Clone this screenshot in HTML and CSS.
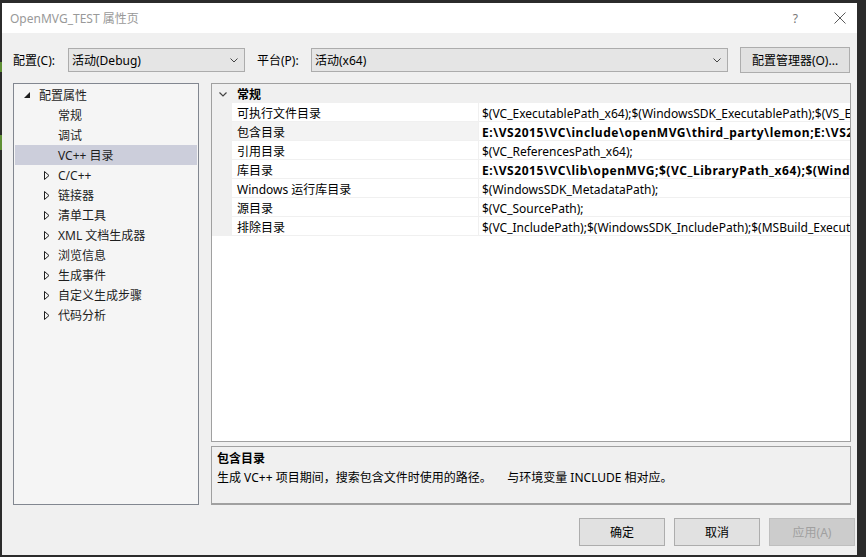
FILE: index.html
```html
<!DOCTYPE html>
<html>
<head>
<meta charset="utf-8">
<link rel="stylesheet" href="styles.css">
</head>
<body>
<div class="window">
  <div class="titlebar">
    <span class="title">OpenMVG_TEST 属性页</span>
    <span class="tb-help">?</span>
    <svg class="tb-close" width="12" height="12" viewBox="0 0 12 12"><path d="M0.5 0.5 L11.5 11.5 M11.5 0.5 L0.5 11.5" stroke="#5a5a5a" stroke-width="1" fill="none"/></svg>
  </div>
  <div class="toolbar">
    <span class="lbl lbl-cfg">配置(C):</span>
    <div class="combo combo-cfg"><span>活动(Debug)</span><svg class="chev" width="8" height="5" viewBox="0 0 8 5"><path d="M0.5 0.5 L4 4 L7.5 0.5" stroke="#444" stroke-width="1" fill="none"/></svg></div>
    <span class="lbl lbl-plat">平台(P):</span>
    <div class="combo combo-plat"><span>活动(x64)</span><svg class="chev" width="8" height="5" viewBox="0 0 8 5"><path d="M0.5 0.5 L4 4 L7.5 0.5" stroke="#444" stroke-width="1" fill="none"/></svg></div>
    <button class="btn btn-mgr">配置管理器(O)...</button>
  </div>
  <div class="main">
    <div class="tree">
      <div class="tree-row lvl0"><span class="tw"><svg width="6" height="6" viewBox="0 0 6 6"><path d="M6 0 L6 6 L0 6 Z" fill="#1e1e1e"/></svg></span><span>配置属性</span></div>
      <div class="tree-row leaf"><span>常规</span></div>
      <div class="tree-row leaf"><span>调试</span></div>
      <div class="tree-row leaf selected"><span>VC++ 目录</span></div>
      <div class="tree-row lvl1"><span class="tw"><svg width="6" height="9" viewBox="0 0 6 9"><path d="M0.5 0.5 L5 4.5 L0.5 8.5 Z" fill="none" stroke="#1e1e1e" stroke-width="1"/></svg></span><span>C/C++</span></div>
      <div class="tree-row lvl1"><span class="tw"><svg width="6" height="9" viewBox="0 0 6 9"><path d="M0.5 0.5 L5 4.5 L0.5 8.5 Z" fill="none" stroke="#1e1e1e" stroke-width="1"/></svg></span><span>链接器</span></div>
      <div class="tree-row lvl1"><span class="tw"><svg width="6" height="9" viewBox="0 0 6 9"><path d="M0.5 0.5 L5 4.5 L0.5 8.5 Z" fill="none" stroke="#1e1e1e" stroke-width="1"/></svg></span><span>清单工具</span></div>
      <div class="tree-row lvl1"><span class="tw"><svg width="6" height="9" viewBox="0 0 6 9"><path d="M0.5 0.5 L5 4.5 L0.5 8.5 Z" fill="none" stroke="#1e1e1e" stroke-width="1"/></svg></span><span>XML 文档生成器</span></div>
      <div class="tree-row lvl1"><span class="tw"><svg width="6" height="9" viewBox="0 0 6 9"><path d="M0.5 0.5 L5 4.5 L0.5 8.5 Z" fill="none" stroke="#1e1e1e" stroke-width="1"/></svg></span><span>浏览信息</span></div>
      <div class="tree-row lvl1"><span class="tw"><svg width="6" height="9" viewBox="0 0 6 9"><path d="M0.5 0.5 L5 4.5 L0.5 8.5 Z" fill="none" stroke="#1e1e1e" stroke-width="1"/></svg></span><span>生成事件</span></div>
      <div class="tree-row lvl1"><span class="tw"><svg width="6" height="9" viewBox="0 0 6 9"><path d="M0.5 0.5 L5 4.5 L0.5 8.5 Z" fill="none" stroke="#1e1e1e" stroke-width="1"/></svg></span><span>自定义生成步骤</span></div>
      <div class="tree-row lvl1"><span class="tw"><svg width="6" height="9" viewBox="0 0 6 9"><path d="M0.5 0.5 L5 4.5 L0.5 8.5 Z" fill="none" stroke="#1e1e1e" stroke-width="1"/></svg></span><span>代码分析</span></div>
    </div>
    <div class="right">
      <div class="grid">
        <div class="cat-row"><span class="cat-tw"><svg width="8" height="5" viewBox="0 0 8 5"><path d="M0.5 0.5 L4 4 L7.5 0.5" stroke="#444" stroke-width="1.2" fill="none"/></svg></span><span class="cat-name">常规</span></div>
        <div class="prop-row"><span class="gutter"></span><span class="name">可执行文件目录</span><span class="value">$(VC_ExecutablePath_x64);$(WindowsSDK_ExecutablePath);$(VS_ExecutablePath);$(MSBuild_ExecutablePath);$(FxCopDir);$(PATH);</span></div>
        <div class="prop-row current"><span class="gutter"></span><span class="name">包含目录</span><span class="value bold">E:\VS2015\VC\include\openMVG\third_party\lemon;E:\VS2015\VC\include\openMVG\third_party;$(VC_IncludePath);</span></div>
        <div class="prop-row"><span class="gutter"></span><span class="name">引用目录</span><span class="value">$(VC_ReferencesPath_x64);</span></div>
        <div class="prop-row"><span class="gutter"></span><span class="name">库目录</span><span class="value bold">E:\VS2015\VC\lib\openMVG;$(VC_LibraryPath_x64);$(WindowsSDK_LibraryPath_x64);</span></div>
        <div class="prop-row"><span class="gutter"></span><span class="name">Windows 运行库目录</span><span class="value">$(WindowsSDK_MetadataPath);</span></div>
        <div class="prop-row"><span class="gutter"></span><span class="name">源目录</span><span class="value">$(VC_SourcePath);</span></div>
        <div class="prop-row"><span class="gutter"></span><span class="name">排除目录</span><span class="value">$(VC_IncludePath);$(WindowsSDK_IncludePath);$(MSBuild_ExecutablePath);$(VC_LibraryPath_x64);</span></div>
      </div>
      <div class="desc">
        <div class="desc-title">包含目录</div>
        <div class="desc-text">生成 VC++ 项目期间，搜索包含文件时使用的路径。&nbsp;&nbsp;&nbsp;&nbsp; 与环境变量 INCLUDE 相对应。</div>
      </div>
    </div>
  </div>
  <div class="buttons">
    <button class="btn dlg">确定</button>
    <button class="btn dlg">取消</button>
    <button class="btn dlg disabled">应用(A)</button>
  </div>
</div>
</body>
</html>
```

FILE: styles.css
```css
html, body {
  margin: 0;
  padding: 0;
}
body {
  width: 866px;
  height: 557px;
  background:
    linear-gradient(to bottom, #2b2b2b 0 62px, #5f8f35 62px 72px, #2b2b2b 72px 135px, #5f8f35 135px 150px, #2b2b2b 150px 100%) left top / 2px 100% no-repeat,
    #2b2b2b;
  overflow: hidden;
  font-family: "Noto Sans", "Noto Sans CJK SC", sans-serif;
  font-size: 12px;
  color: #000;
}
.window {
  margin: 3px 0 0 2px;
  width: 855px;
  height: 552px;
  background: #f0f0f0;
}
.titlebar {
  height: 30px;
  background: #fff;
  display: flex;
  align-items: center;
  padding-left: 8px;
}
.title {
  color: #999;
  font-size: 12px;
  flex: 1;
}
.tb-help {
  color: #777;
  font-size: 12px;
  margin-right: 36px;
}
.tb-close {
  margin-right: 11px;
}
.toolbar {
  margin-top: 14px;
  height: 26px;
  padding-left: 11px;
  display: flex;
  align-items: center;
}
.lbl {
  white-space: nowrap;
}
.lbl-cfg { width: 55px; }
.lbl-plat { width: 54px; margin-left: 12px; }
.combo {
  box-sizing: border-box;
  height: 24px;
  background: #e5e5e5;
  border: 1px solid #acacac;
  display: flex;
  align-items: center;
  justify-content: space-between;
  padding: 0 6px 0 3px;
}
.combo-cfg { width: 177px; }
.combo-plat { width: 417px; }
.btn {
  box-sizing: border-box;
  font-family: inherit;
  font-size: 12px;
  color: #000;
  background: #e1e1e1;
  border: 1px solid #adadad;
  padding: 0;
  margin: 0;
}
.btn-mgr {
  width: 110px;
  height: 26px;
  margin-left: 12px;
}
.main {
  margin-top: 10px;
  padding-left: 11px;
  display: flex;
}
.tree {
  box-sizing: border-box;
  width: 186px;
  height: 422px;
  border: 1px solid #828790;
  background: #f5f5f5;
  padding: 1px;
}
.tree-row {
  height: 20px;
  display: flex;
  align-items: center;
  white-space: nowrap;
  color: #1e1e1e;
}
.tree-row.lvl0 { padding-left: 9px; }
.tree-row.lvl0 .tw { width: 15px; }
.tree-row.lvl1 { padding-left: 29px; }
.tree-row.lvl1 .tw { width: 14px; }
.tree-row.leaf { padding-left: 43px; }
.tw {
  display: flex;
  align-items: center;
}
.tree-row.selected {
  background: #cccedb;
}
.right {
  margin-left: 12px;
  width: 640px;
  display: flex;
  flex-direction: column;
  gap: 4px;
}
.grid {
  box-sizing: border-box;
  height: 359px;
  border: 1px solid #a0a0a0;
  background: #fff;
  overflow: hidden;
}
.cat-row {
  box-sizing: border-box;
  height: 19px;
  padding-top: 1px;
  background: #f0f0f0;
  display: flex;
  align-items: center;
  white-space: nowrap;
}
.cat-tw {
  width: 25px;
  padding-left: 7px;
  box-sizing: border-box;
  display: flex;
  align-items: center;
}
.cat-name {
  font-weight: bold;
}
.prop-row {
  height: 19px;
  display: flex;
  white-space: nowrap;
}
.gutter {
  width: 20px;
  flex: none;
  background: #f0f0f0;
}
.name {
  box-sizing: border-box;
  width: 246px;
  height: 19px;
  flex: none;
  padding-left: 5px;
  line-height: 22px;
  border-bottom: 1px solid #f0f0f0;
}
.prop-row.current .name {
  background: #f3f3f3;
}
.value {
  box-sizing: border-box;
  height: 19px;
  flex: 1;
  min-width: 0;
  overflow: hidden;
  padding-left: 3px;
  line-height: 22px;
  border-left: 1px solid #f0f0f0;
  border-bottom: 1px solid #f0f0f0;
}
.value.bold {
  font-weight: bold;
  letter-spacing: 0.55px;
}
.desc {
  box-sizing: border-box;
  height: 59px;
  border: 1px solid #a0a0a0;
  border-bottom-width: 2px;
  background: #f0f0f0;
  padding: 2px 5px;
}
.desc-title {
  font-weight: bold;
  line-height: 19px;
}
.desc-text {
  line-height: 19px;
  white-space: nowrap;
}
.buttons {
  margin-top: 13px;
  padding-right: 2px;
  display: flex;
  justify-content: flex-end;
}
.btn.dlg {
  width: 86px;
  height: 28px;
}
.btn.dlg + .btn.dlg {
  margin-left: 9px;
}
.btn.dlg.disabled {
  margin-left: 8px;
}
.btn.disabled {
  background: #cccccc;
  border-color: #bfbfbf;
  color: #a0a0a0;
}
```
